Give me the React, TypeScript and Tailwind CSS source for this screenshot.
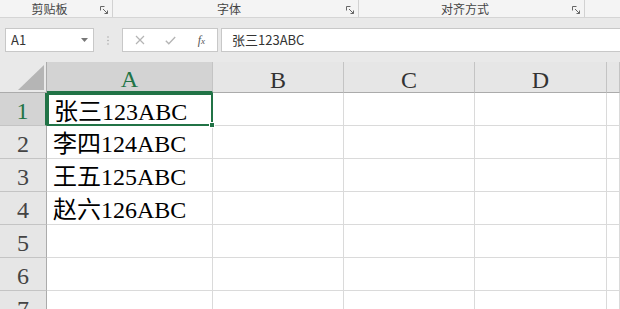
const rows = [
  "张三123ABC",
  "李四124ABC",
  "王五125ABC",
  "赵六126ABC",
  "",
  "",
  "",
];

const cols = ["A", "B", "C", "D", ""];

const serif = "font-['Liberation_Serif','Noto_Sans_CJK_SC',serif]";

function Launcher() {
  return (
    <svg width="9" height="9" viewBox="0 0 9 9" className="text-[#666]">
      <path d="M0.5 0.5h4M0.5 0.5v4" stroke="currentColor" strokeWidth="1" fill="none" />
      <path d="M3 3l4.5 4.5M7.5 4.5v3h-3" stroke="currentColor" strokeWidth="1" fill="none" />
    </svg>
  );
}

function RibbonGroup({ label, width }: { label: string; width: string }) {
  return (
    <div className={`relative flex h-full items-center justify-center border-r border-[#d2d2d2] pr-[13px] ${width}`}>
      <span className="text-[12px] text-[#444]">{label}</span>
      <span className="absolute right-[3px] top-[6px]">
        <Launcher />
      </span>
    </div>
  );
}

export default function App() {
  return (
    <div className="flex h-[309px] w-[620px] flex-col overflow-hidden bg-white font-['Noto_Sans_CJK_SC',sans-serif]">
      {/* ribbon labels */}
      <div className="flex h-[18px] shrink-0 border-b border-[#d5d5d5] bg-[#f4f4f4]">
        <RibbonGroup label="剪贴板" width="w-[113px]" />
        <RibbonGroup label="字体" width="w-[246px]" />
        <RibbonGroup label="对齐方式" width="w-[226px]" />
        <div className="flex-1" />
      </div>

      {/* formula bar */}
      <div className="flex h-[44px] shrink-0 items-start bg-[#e9e9e9] pt-[10px]">
        <div className="ml-[5px] flex h-[24px] w-[89px] items-center justify-between border border-[#c8c8c8] bg-white pl-[5px] pr-[5px]">
          <span className="text-[13px] text-[#333]">A1</span>
          <svg width="7" height="4" viewBox="0 0 7 4">
            <path d="M0 0h7L3.5 4z" fill="#777" />
          </svg>
        </div>
        <div className="flex h-[24px] w-[28px] items-center justify-center">
          <svg width="2" height="9" viewBox="0 0 2 9">
            <circle cx="1" cy="1" r="0.8" fill="#aaa" />
            <circle cx="1" cy="4.5" r="0.8" fill="#aaa" />
            <circle cx="1" cy="8" r="0.8" fill="#aaa" />
          </svg>
        </div>
        <div className="flex h-[24px] w-[96px] items-center border border-[#c8c8c8] bg-white">
          <div className="flex w-[32px] justify-center pl-[2px]">
            <svg width="10" height="10" viewBox="0 0 10 10">
              <path d="M1 1l8 8M9 1l-8 8" stroke="#b4b4b4" strokeWidth="1.2" />
            </svg>
          </div>
          <div className="flex w-[32px] justify-center">
            <svg width="11" height="9" viewBox="0 0 11 9">
              <path d="M0.8 4.8l3 3L10.2 1" stroke="#b4b4b4" strokeWidth="1.3" fill="none" />
            </svg>
          </div>
          <div className="flex w-[32px] justify-center">
            <span className="font-['Liberation_Serif',serif] text-[12px] italic text-[#555]">
              f<span className="text-[9px]">x</span>
            </span>
          </div>
        </div>
        <div className="ml-[3px] flex h-[24px] flex-1 items-center border-y border-l border-[#c8c8c8] bg-white pl-[10px]">
          <span className="text-[13px] text-[#333]">张三123ABC</span>
        </div>
      </div>

      {/* grid */}
      <div className={`grid grid-cols-[47px_166px_131px_131px_132px_1fr] grid-rows-[31px_repeat(7,33px)] ${serif}`}>
        <div className="relative border-b border-r border-[#ababab] bg-[#e9e9e9]">
          <svg width="26" height="25" viewBox="0 0 26 25" className="absolute bottom-[2px] right-[2px]">
            <path d="M26 0V25H0z" fill="#b5b5b5" />
          </svg>
        </div>
        {cols.map((c, i) => (
          <div
            key={i}
            className={
              i === 0
                ? "flex items-center justify-center border-b-2 border-r border-b-[#217346] border-r-[#c4c4c4] bg-[#d3d3d3] pt-[5px] text-[24px] leading-none text-[#217346]"
                : "flex items-center justify-center border-b border-r border-b-[#ababab] border-r-[#c4c4c4] bg-[#e6e6e6] pt-[5px] text-[24px] leading-none text-[#333]"
            }
          >
            {c}
          </div>
        ))}
        {rows.map((text, r) => (
          <div key={r} className="contents">
            <div
              className={
                r === 0
                  ? "flex items-center justify-center border-b border-r-2 border-b-[#c4c4c4] border-r-[#217346] bg-[#d3d3d3] pt-[4px] text-[24px] leading-none text-[#217346]"
                  : "flex items-center justify-center border-b border-r border-b-[#c4c4c4] border-r-[#ababab] bg-[#e6e6e6] pt-[4px] text-[24px] leading-none text-[#444]"
              }
            >
              {r + 1}
            </div>
            {cols.map((_, c) => (
              <div
                key={c}
                className={
                  r === 0 && c === 0
                    ? "relative flex items-center border-2 border-[#217346] pl-[5px] pt-[4px] text-[24px] leading-none text-black"
                    : "flex items-center border-b border-r border-[#dadada] pl-[6px] pt-[4px] text-[24px] leading-none text-black"
                }
              >
                {c === 0 ? text : ""}
                {r === 0 && c === 0 && (
                  <span className="absolute -bottom-[4px] -right-[4px] h-[6px] w-[6px] border border-white bg-[#217346]" />
                )}
              </div>
            ))}
          </div>
        ))}
      </div>
    </div>
  );
}
